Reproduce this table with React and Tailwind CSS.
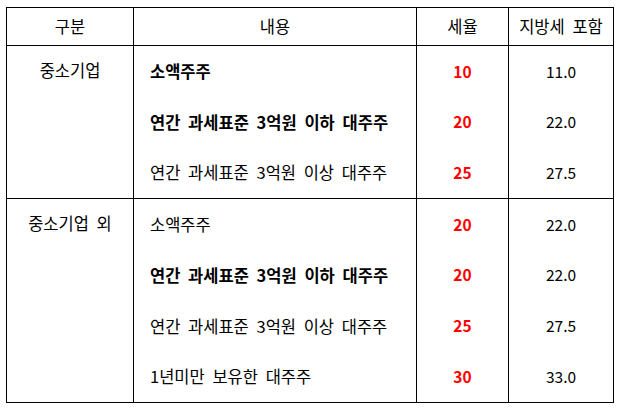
import React from 'react';

const GROUPS = [
  {
    name: '중소기업',
    rows: [
      { label: '소액주주', bold: true, rate: '10', total: '11.0' },
      { label: '연간 과세표준 3억원 이하 대주주', bold: true, rate: '20', total: '22.0' },
      { label: '연간 과세표준 3억원 이상 대주주', bold: false, rate: '25', total: '27.5' },
    ],
  },
  {
    name: '중소기업 외',
    rows: [
      { label: '소액주주', bold: false, rate: '20', total: '22.0' },
      { label: '연간 과세표준 3억원 이하 대주주', bold: true, rate: '20', total: '22.0' },
      { label: '연간 과세표준 3억원 이상 대주주', bold: false, rate: '25', total: '27.5' },
      { label: '1년미만 보유한 대주주', bold: false, rate: '30', total: '33.0' },
    ],
  },
];

const cell = 'border border-black';

export default function App() {
  return (
    <div
      className="w-[624px] h-[410px] bg-white pt-[7px] pl-[6px] text-[16.5px] text-black [word-spacing:4px]"
      style={{ fontFamily: '"Noto Sans CJK KR", "Noto Sans", sans-serif' }}
    >
      <table className="border-collapse table-fixed w-[607px]">
        <colgroup>
          <col className="w-[127px]" />
          <col className="w-[283px]" />
          <col className="w-[92px]" />
          <col className="w-[105px]" />
        </colgroup>
        <thead>
          <tr className="h-[38px]">
            <th className={`${cell} font-normal text-center`}>구분</th>
            <th className={`${cell} font-normal text-center`}>내용</th>
            <th className={`${cell} font-normal text-center`}>세율</th>
            <th className={`${cell} font-normal text-center`}>지방세 포함</th>
          </tr>
        </thead>
        <tbody>
          {GROUPS.map((group) =>
            group.rows.map((row, i) => (
              <tr key={group.name + i} className="h-[51px]">
                {i === 0 && (
                  <td rowSpan={group.rows.length} className={`${cell} align-top text-center pt-[12px]`}>
                    {group.name}
                  </td>
                )}
                <td className={`border-x border-black pl-[16px] ${row.bold ? 'font-bold' : ''} ${i === group.rows.length - 1 ? 'border-b' : ''}`}>
                  {row.label}
                </td>
                <td className={`border-x border-black text-center text-[15.5px] font-bold text-[#ff0000] ${i === group.rows.length - 1 ? 'border-b' : ''}`}>
                  {row.rate}
                </td>
                <td className={`border-x border-black text-center text-[15.5px] ${i === group.rows.length - 1 ? 'border-b' : ''}`}>
                  {row.total}
                </td>
              </tr>
            ))
          )}
        </tbody>
      </table>
    </div>
  );
}
